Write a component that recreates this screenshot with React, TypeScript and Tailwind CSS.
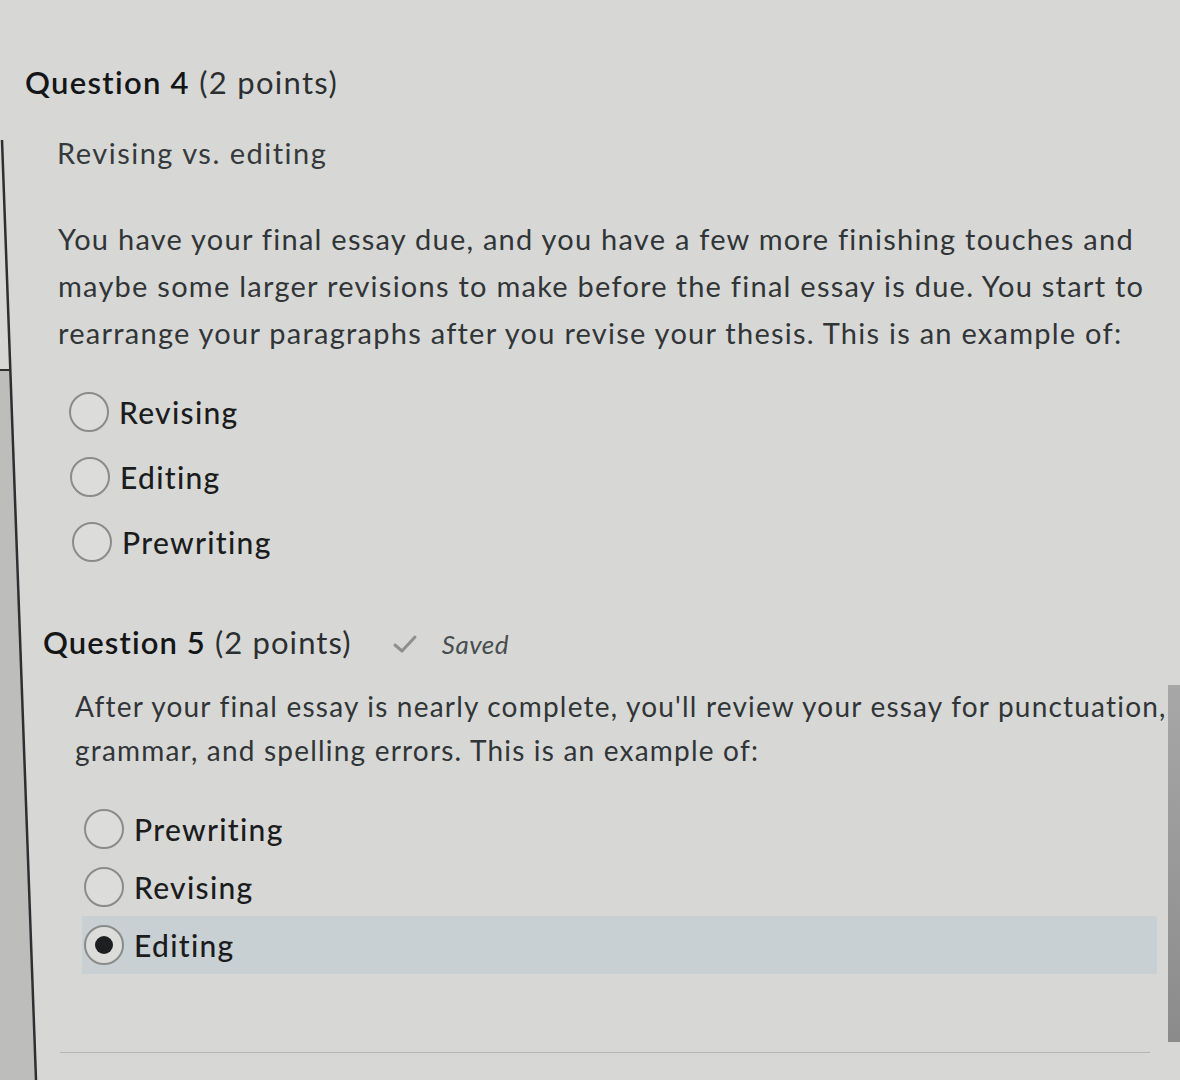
import React from "react";

type Option = { label: string; selected?: boolean };

const Radio: React.FC<{ selected?: boolean }> = ({ selected }) => (
  <span className="flex h-[40px] w-[40px] shrink-0 items-center justify-center rounded-full border-2 border-[#8a8c8c] bg-[#dcdddb]">
    {selected && <span className="h-[18px] w-[18px] rounded-full bg-[#1d1f20]" />}
  </span>
);

const OptionRow: React.FC<Option & { className?: string }> = ({
  label,
  selected,
  className = "",
}) => (
  <div className={`flex items-center gap-[10px] ${className}`}>
    <Radio selected={selected} />
    <span className="text-[30px] font-medium leading-none tracking-[1.3px] text-[#1b1c1d]">
      {label}
    </span>
  </div>
);

export default function App() {
  const q4Options: Option[] = [
    { label: "Revising" },
    { label: "Editing" },
    { label: "Prewriting" },
  ];
  const q5Options: Option[] = [
    { label: "Prewriting" },
    { label: "Revising" },
    { label: "Editing", selected: true },
  ];

  return (
    <div
      className="relative h-[1080px] w-[1180px] overflow-hidden bg-[#d7d8d6] text-[#2f3335] [font-variant-ligatures:none]"
      style={{ fontFamily: "Lato, 'Open Sans', sans-serif" }}
    >
      {/* photo bezel on the left edge */}
      <svg
        className="pointer-events-none absolute left-0 top-0"
        width="60"
        height="1080"
        viewBox="0 0 60 1080"
      >
        <polygon points="0,370 10,370 35,1080 0,1080" fill="#bdbebc" />
        <line x1="2" y1="140" x2="36" y2="1080" stroke="#2e2f30" strokeWidth="2.5" />
        <line x1="0" y1="370" x2="10" y2="370" stroke="#2e2f30" strokeWidth="2" />
      </svg>

      {/* scrollbar */}
      <div className="absolute right-0 top-[685px] h-[357px] w-[12px] bg-gradient-to-b from-[#a6a7a6] to-[#8a8b8a]" />

      <div className="flex flex-col pt-[64px]">
        {/* Question 4 */}
        <h2 className="ml-[25px] text-[31px] leading-[36px] tracking-[1.3px] text-[#141516]">
          <span className="font-semibold">Question 4</span>{" "}
          <span className="font-normal text-[#2c2f31]">(2 points)</span>
        </h2>
        <p className="ml-[57px] mt-[36px] text-[29px] leading-[34px] tracking-[1.5px] text-[#35393b]">
          Revising vs. editing
        </p>
        <p className="ml-[58px] mt-[45px] whitespace-nowrap text-[29px] leading-[47px] tracking-[1.25px] text-[#313537]">
          You have your final essay due, and you have a few more finishing touches and
          <br />
          maybe some larger revisions to make before the final essay is due. You start to
          <br />
          rearrange your paragraphs after you revise your thesis. This is an example of:
        </p>

        <div className="mt-[36px] flex flex-col gap-[25px]">
          {q4Options.map((o, i) => (
            <OptionRow
              key={o.label}
              {...o}
              className={i === 0 ? "ml-[69px]" : i === 1 ? "ml-[70px]" : "ml-[72px]"}
            />
          ))}
        </div>

        {/* Question 5 */}
        <div className="ml-[43px] mt-[62px] flex items-center">
          <h2 className="text-[31px] leading-[36px] tracking-[1.1px] text-[#141516]">
            <span className="font-semibold">Question 5</span>{" "}
            <span className="font-normal text-[#2c2f31]">(2 points)</span>
          </h2>
          <svg className="ml-[40px] mt-[4px]" width="26" height="20" viewBox="0 0 26 20">
            <path
              d="M3 11 L10 17 L23 3"
              fill="none"
              stroke="#8d8f90"
              strokeWidth="3"
              strokeLinecap="round"
              strokeLinejoin="round"
            />
          </svg>
          <span className="ml-[24px] mt-[4px] text-[26px] italic leading-none tracking-[0.5px] text-[#4a4d4f]">
            Saved
          </span>
        </div>
        <p className="ml-[75px] mt-[24px] whitespace-nowrap text-[28px] leading-[44px] tracking-[1.2px] text-[#313537]">
          After your final essay is nearly complete, you'll review your essay for punctuation,
          <br />
          grammar, and spelling errors. This is an example of:
        </p>

        <div className="mt-[28px] flex flex-col">
          {q5Options.map((o) => (
            <div
              key={o.label}
              className={`ml-[82px] mr-[23px] flex h-[58px] items-center pl-[2px] ${
                o.selected ? "bg-[#c9d0d3]" : ""
              }`}
            >
              <OptionRow {...o} />
            </div>
          ))}
        </div>

        <div className="ml-[60px] mr-[30px] mt-[78px] h-px bg-[#b5b6b4]" />
      </div>
    </div>
  );
}
